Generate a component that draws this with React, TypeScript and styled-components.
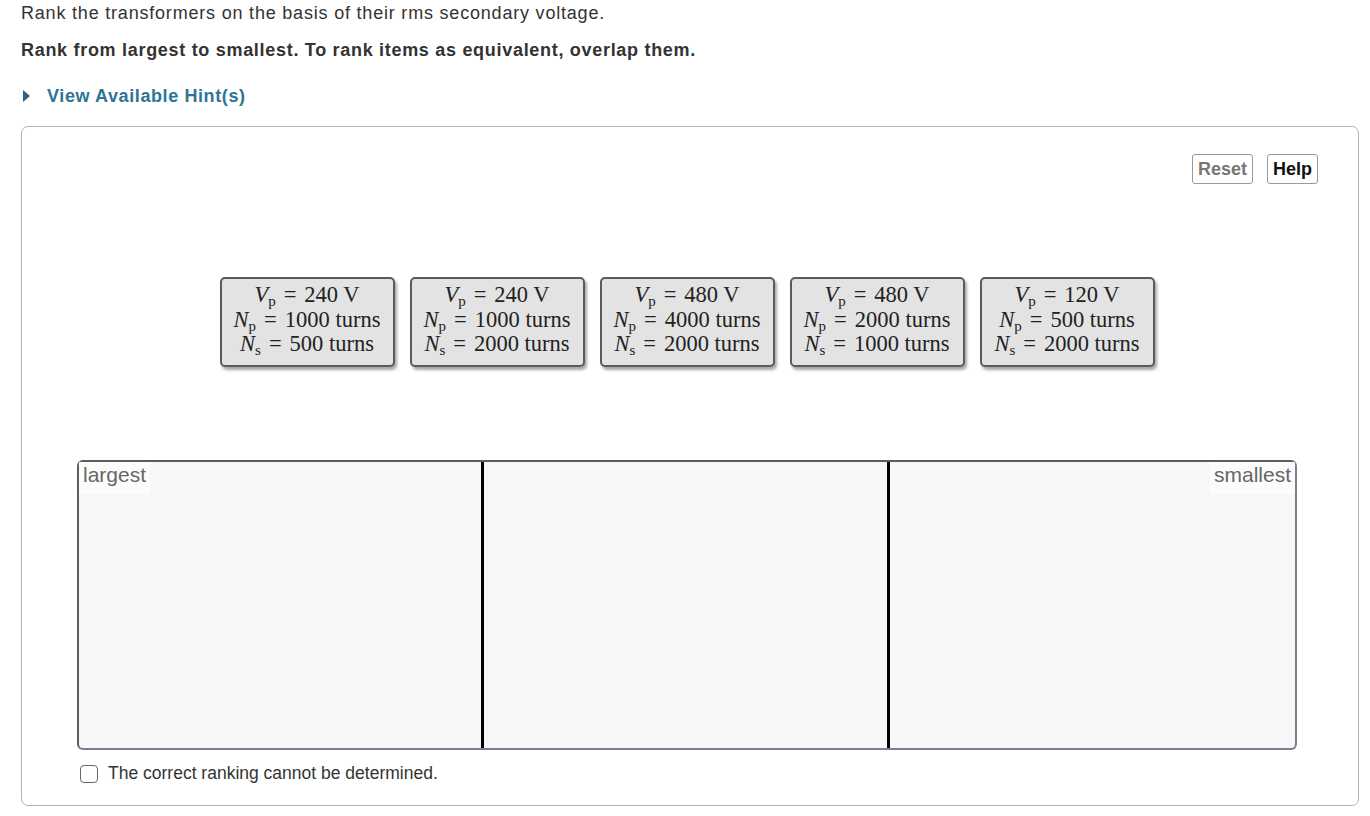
import React from 'react';
import styled, { createGlobalStyle } from 'styled-components';

const GlobalStyle = createGlobalStyle`
  body {
    margin: 0;
    background: #fff;
    font-family: "Liberation Sans", Arial, sans-serif;
    color: #333;
  }
`;

type Tile = { vp: string; np: string; ns: string };

const tiles: Tile[] = [
  { vp: '240', np: '1000', ns: '500' },
  { vp: '240', np: '1000', ns: '2000' },
  { vp: '480', np: '4000', ns: '2000' },
  { vp: '480', np: '2000', ns: '1000' },
  { vp: '120', np: '500', ns: '2000' },
];

const App: React.FC = () => {
  return (
    <React.Fragment>
      <GlobalStyle />
      <Page>
        <Prompt>Rank the transformers on the basis of their rms secondary voltage.</Prompt>
        <Instruction>Rank from largest to smallest. To rank items as equivalent, overlap them.</Instruction>
        <HintLink>
          <HintArrow />
          View Available Hint(s)
        </HintLink>
        <Panel>
          <Toolbar>
            <ToolButton muted>Reset</ToolButton>
            <ToolButton>Help</ToolButton>
          </Toolbar>
          <TileRow>
            {tiles.map((t, i) => (
              <TileCard key={i}>
                <MathLine>
                  <Var>V</Var><Sub>p</Sub><Eq>=</Eq>{t.vp} V
                </MathLine>
                <MathLine>
                  <Var>N</Var><Sub>p</Sub><Eq>=</Eq>{t.np} turns
                </MathLine>
                <MathLine>
                  <Var>N</Var><Sub>s</Sub><Eq>=</Eq>{t.ns} turns
                </MathLine>
              </TileCard>
            ))}
          </TileRow>
          <RankBox>
            <RankColumn divided>
              <RankLabel>largest</RankLabel>
            </RankColumn>
            <RankColumn divided />
            <RankColumn right>
              <RankLabel>smallest</RankLabel>
            </RankColumn>
          </RankBox>
          <CheckRow>
            <CheckBox />
            The correct ranking cannot be determined.
          </CheckRow>
        </Panel>
      </Page>
    </React.Fragment>
  );
};

const Page = styled.div`
  padding: 1px 11px 0 21px;
  width: 1338px;
`;

const Prompt = styled.p`
  margin: 0;
  font-size: 18px;
  line-height: 24px;
  letter-spacing: 0.8px;
  color: #333;
`;

const Instruction = styled.p`
  margin: 13px 0 0;
  font-size: 18px;
  line-height: 24px;
  letter-spacing: 0.7px;
  font-weight: 700;
  color: #333;
`;

const HintLink = styled.div`
  display: flex;
  align-items: center;
  margin-top: 22px;
  font-size: 18px;
  line-height: 24px;
  letter-spacing: 0.6px;
  font-weight: 700;
  color: #2e7496;
`;

const HintArrow = styled.span`
  width: 0;
  height: 0;
  border-top: 6px solid transparent;
  border-bottom: 6px solid transparent;
  border-left: 7px solid #2c6584;
  margin: 0 17px 0 2px;
`;

const Panel = styled.div`
  margin-top: 18px;
  height: 680px;
  box-sizing: border-box;
  border: 1px solid #b3b3b3;
  border-radius: 7px;
  display: flex;
  flex-direction: column;
`;

const Toolbar = styled.div`
  display: flex;
  justify-content: flex-end;
  gap: 14px;
  padding: 27px 40px 0 0;
`;

const ToolButton = styled.button<{ muted?: boolean }>`
  height: 30px;
  padding: 0 5px;
  box-sizing: border-box;
  border: 1px solid #9a9a9a;
  border-radius: 3px;
  background: #fff;
  font-family: "Liberation Sans", Arial, sans-serif;
  font-size: 18px;
  font-weight: 700;
  color: ${p => (p.muted ? '#777' : '#111')};
`;

const TileRow = styled.div`
  display: flex;
  justify-content: center;
  gap: 15px;
  margin-top: 93px;
  padding-right: 6px;
`;

const TileCard = styled.div`
  width: 175px;
  height: 90px;
  box-sizing: border-box;
  padding-bottom: 4px;
  border: 2px solid #5a5a62;
  border-radius: 5px;
  background: #e3e3e3;
  box-shadow: 2px 3px 3px rgba(0, 0, 0, 0.35);
  display: flex;
  flex-direction: column;
  justify-content: center;
  align-items: center;
  font-family: "Liberation Serif", "Times New Roman", serif;
  font-size: 22.5px;
  color: #222;
`;

const MathLine = styled.div`
  line-height: 24.5px;
  white-space: nowrap;
`;

const Var = styled.span`
  font-style: italic;
`;

const Sub = styled.sub`
  font-size: 15px;
  vertical-align: -4px;
  line-height: 0;
`;

const Eq = styled.span`
  margin: 0 8px;
`;

const RankBox = styled.div`
  margin: 93px 0 0 55px;
  width: 1220px;
  height: 290px;
  box-sizing: border-box;
  border: 2px solid #5c5c66;
  border-right-color: #7d7d90;
  border-bottom-color: #7d7d90;
  border-radius: 6px;
  background: #f7f7f7;
  display: grid;
  grid-template-columns: 1fr 1fr 1fr;
`;

const RankColumn = styled.div<{ divided?: boolean; right?: boolean }>`
  border-right: ${p => (p.divided ? '3px solid #000' : 'none')};
  display: flex;
  align-items: flex-start;
  justify-content: ${p => (p.right ? 'flex-end' : 'flex-start')};
`;

const RankLabel = styled.span`
  padding: 0 4px 7px 4px;
  background: #fcfcfc;
  font-size: 21px;
  line-height: 25px;
  color: #666;
`;

const CheckRow = styled.label`
  display: flex;
  align-items: center;
  gap: 10px;
  margin: 13px 0 0 58px;
  font-size: 17.5px;
  color: #333;
`;

const CheckBox = styled.span`
  width: 18px;
  height: 18px;
  box-sizing: border-box;
  border: 1.5px solid #666;
  border-radius: 4px;
  background: #fff;
`;

export default App;
